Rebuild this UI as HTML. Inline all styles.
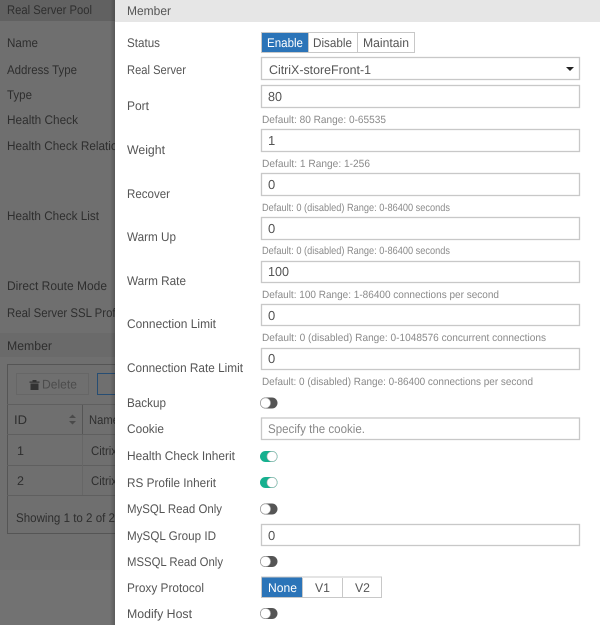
<!DOCTYPE html>
<html><head><meta charset="utf-8"><style>
html,body{margin:0;padding:0;width:600px;height:625px;overflow:hidden;background:#fff}
svg{display:block}
text{font-family:"Liberation Sans",sans-serif;font-size:12.5px;fill:#555}
.l text{fill:#2e2e2e}
.h{font-size:10.5px;fill:#8a8a8a}
.i{fill:#fff;stroke:#c8c8c8;stroke-width:1.3}
.v{fill:#555;font-size:13px}
.k{fill:#fff;stroke:#bbb;stroke-width:.6}
</style></head><body>
<svg width="600" height="625" viewBox="0 0 600 625" xmlns="http://www.w3.org/2000/svg" text-rendering="geometricPrecision">
<defs><linearGradient id="s" x1="0" x2="1"><stop offset="0" stop-color="#000" stop-opacity="0"/><stop offset="1" stop-color="#000" stop-opacity=".2"/></linearGradient></defs>
<g class="l">
<rect width="115" height="625" fill="#6f6f6f"/>
<rect width="115" height="21" fill="#616161"/>
<rect y="333" width="115" height="24" fill="#6a6a6a"/>
<rect y="570" width="115" height="55" fill="#727272"/>
<text x="7" y="14" textLength="85" lengthAdjust="spacingAndGlyphs">Real Server Pool</text>
<text x="7" y="47" textLength="31" lengthAdjust="spacingAndGlyphs">Name</text>
<text x="7" y="74" textLength="70" lengthAdjust="spacingAndGlyphs">Address Type</text>
<text x="7" y="99" textLength="25" lengthAdjust="spacingAndGlyphs">Type</text>
<text x="7" y="124" textLength="71" lengthAdjust="spacingAndGlyphs">Health Check</text>
<text x="7" y="150" textLength="117" lengthAdjust="spacingAndGlyphs">Health Check Relation</text>
<text x="7" y="220" textLength="92" lengthAdjust="spacingAndGlyphs">Health Check List</text>
<text x="7" y="290" textLength="100" lengthAdjust="spacingAndGlyphs">Direct Route Mode</text>
<text x="7" y="317" textLength="120" lengthAdjust="spacingAndGlyphs">Real Server SSL Profile</text>
<text x="7" y="350" textLength="45" lengthAdjust="spacingAndGlyphs">Member</text>
<rect x="7.500" y="364.500" width="120" height="169" fill="none" stroke="#555"/>
<rect x="16.500" y="373.500" width="72" height="21" fill="none" stroke="#666"/>
<path d="M30.500 383.500h8v6.500h-8zM29.500 381.500h10v1.300h-10zM32.500 380h4v1.500h-4z" fill="#333"/>
<text x="42" y="388.500" textLength="35" lengthAdjust="spacingAndGlyphs" style="fill:#4c4c4c">Delete</text>
<rect x="97.500" y="373.500" width="30" height="21" fill="none" stroke="#264d73"/>
<path d="M7 404.500h110M7 434.500h110M7 465.500h110M7 495.500h110" stroke="#5f5f5f"/>
<path d="M82.500 405v29" stroke="#555"/>
<path d="M82.500 435v60" stroke="#666"/>
<text x="14" y="424" textLength="13" lengthAdjust="spacingAndGlyphs">ID</text>
<path d="M69 418l3.500-3.500 3.500 3.500zM69 421l3.500 3.500 3.500-3.500z" fill="#4a4a4a"/>
<text x="89" y="424" textLength="30" lengthAdjust="spacingAndGlyphs">Name</text>
<text x="17" y="455">1</text><text x="17" y="485">2</text>
<text x="91" y="455" textLength="26" lengthAdjust="spacingAndGlyphs">Citrix</text>
<text x="91" y="485" textLength="26" lengthAdjust="spacingAndGlyphs">Citrix</text>
<text x="16" y="522" textLength="99" lengthAdjust="spacingAndGlyphs">Showing 1 to 2 of 2</text>
</g>
<rect x="110" width="5" height="625" fill="url(#s)"/>
<rect x="115" width="485" height="625" fill="#fff"/>
<rect x="115" width="485" height="22" fill="#e6e6e6"/>
<text x="127" y="15" textLength="44" lengthAdjust="spacingAndGlyphs">Member</text>

<text x="127" y="47" textLength="33" lengthAdjust="spacingAndGlyphs">Status</text>
<text x="127" y="74" textLength="59" lengthAdjust="spacingAndGlyphs">Real Server</text>
<text x="127" y="110" textLength="22" lengthAdjust="spacingAndGlyphs">Port</text>
<text x="127" y="154" textLength="38" lengthAdjust="spacingAndGlyphs">Weight</text>
<text x="127" y="198" textLength="43" lengthAdjust="spacingAndGlyphs">Recover</text>
<text x="127" y="241" textLength="49" lengthAdjust="spacingAndGlyphs">Warm Up</text>
<text x="127" y="285" textLength="59" lengthAdjust="spacingAndGlyphs">Warm Rate</text>
<text x="127" y="328" textLength="89" lengthAdjust="spacingAndGlyphs">Connection Limit</text>
<text x="127" y="372" textLength="116" lengthAdjust="spacingAndGlyphs">Connection Rate Limit</text>
<text x="127" y="407" textLength="39" lengthAdjust="spacingAndGlyphs">Backup</text>
<text x="127" y="433" textLength="37" lengthAdjust="spacingAndGlyphs">Cookie</text>
<text x="127" y="460" textLength="108" lengthAdjust="spacingAndGlyphs">Health Check Inherit</text>
<text x="127" y="487" textLength="89" lengthAdjust="spacingAndGlyphs">RS Profile Inherit</text>
<text x="127" y="513" textLength="95" lengthAdjust="spacingAndGlyphs">MySQL Read Only</text>
<text x="127" y="540" textLength="89" lengthAdjust="spacingAndGlyphs">MySQL Group ID</text>
<text x="127" y="566" textLength="96" lengthAdjust="spacingAndGlyphs">MSSQL Read Only</text>
<text x="127" y="592" textLength="77" lengthAdjust="spacingAndGlyphs">Proxy Protocol</text>
<text x="127" y="618" textLength="65" lengthAdjust="spacingAndGlyphs">Modify Host</text>

<rect x="261.500" y="32.500" width="153" height="20" fill="#fff" stroke="#c8c8c8"/>
<rect x="262" y="33" width="46" height="19" fill="#2b74b8"/>
<path d="M308.500 33v19M357.500 33v19" stroke="#c8c8c8"/>
<text x="267" y="47" textLength="36" lengthAdjust="spacingAndGlyphs" style="fill:#fff">Enable</text>
<text x="313" y="47" textLength="39" lengthAdjust="spacingAndGlyphs">Disable</text>
<text x="363" y="47" textLength="46" lengthAdjust="spacingAndGlyphs">Maintain</text>

<rect class="i" x="261.500" y="57.500" width="318" height="22"/>
<text x="269" y="74" textLength="102" lengthAdjust="spacingAndGlyphs">CitriX-storeFront-1</text>
<path d="M566 67h8l-4 4z" fill="#222"/>

<rect class="i" x="261.500" y="85.500" width="318" height="22"/><text class="v" x="268" y="101" textLength="14" lengthAdjust="spacingAndGlyphs">80</text>
<text class="h" x="262" y="123" textLength="124" lengthAdjust="spacingAndGlyphs">Default: 80 Range: 0-65535</text>
<rect class="i" x="261.500" y="129.500" width="318" height="22"/><text class="v" x="268" y="145">1</text>
<text class="h" x="262" y="167" textLength="108" lengthAdjust="spacingAndGlyphs">Default: 1 Range: 1-256</text>
<rect class="i" x="261.500" y="173.500" width="318" height="22"/><text class="v" x="268" y="189">0</text>
<text class="h" x="262" y="211" textLength="188" lengthAdjust="spacingAndGlyphs">Default: 0 (disabled) Range: 0-86400 seconds</text>
<rect class="i" x="261.500" y="217.500" width="318" height="22"/><text class="v" x="268" y="233">0</text>
<text class="h" x="262" y="254" textLength="188" lengthAdjust="spacingAndGlyphs">Default: 0 (disabled) Range: 0-86400 seconds</text>
<rect class="i" x="261.500" y="261.500" width="318" height="21"/><text class="v" x="268" y="276" textLength="21" lengthAdjust="spacingAndGlyphs">100</text>
<text class="h" x="262" y="298" textLength="237" lengthAdjust="spacingAndGlyphs">Default: 100 Range: 1-86400 connections per second</text>
<rect class="i" x="261.500" y="304.500" width="318" height="21"/><text class="v" x="268" y="320">0</text>
<text class="h" x="262" y="341" textLength="284" lengthAdjust="spacingAndGlyphs">Default: 0 (disabled) Range: 0-1048576 concurrent connections</text>
<rect class="i" x="261.500" y="348.500" width="318" height="21"/><text class="v" x="268" y="363">0</text>
<text class="h" x="262" y="385" textLength="271" lengthAdjust="spacingAndGlyphs">Default: 0 (disabled) Range: 0-86400 connections per second</text>

<rect class="i" x="261.500" y="418" width="318" height="21.500"/>
<text x="268" y="433" textLength="97" lengthAdjust="spacingAndGlyphs" style="fill:#888">Specify the cookie.</text>
<rect class="i" x="261.500" y="524.500" width="318" height="21"/><text class="v" x="268" y="540">0</text>

<rect x="261.500" y="577" width="120" height="20.500" fill="#fff" stroke="#c8c8c8"/>
<rect x="262" y="577.500" width="40" height="19.500" fill="#2b74b8"/>
<path d="M302.500 578v19M342.500 578v19" stroke="#c8c8c8"/>
<text x="268" y="592" textLength="29" lengthAdjust="spacingAndGlyphs" style="fill:#fff">None</text>
<text x="315" y="592" textLength="15" lengthAdjust="spacingAndGlyphs">V1</text>
<text x="355" y="592" textLength="15" lengthAdjust="spacingAndGlyphs">V2</text>

<rect x="260" y="397.500" width="17.500" height="11" rx="5.500" fill="#555"/><circle cx="265.500" cy="403" r="5" class="k"/>
<rect x="260" y="503.500" width="17.500" height="11" rx="5.500" fill="#555"/><circle cx="265.500" cy="509" r="5" class="k"/>
<rect x="260" y="556" width="17.500" height="11" rx="5.500" fill="#555"/><circle cx="265.500" cy="561.500" r="5" class="k"/>
<rect x="260" y="608" width="17.500" height="11" rx="5.500" fill="#555"/><circle cx="265.500" cy="613.500" r="5" class="k"/>
<rect x="260" y="451" width="17.500" height="11" rx="5.500" fill="#16b08f"/><circle cx="272" cy="456.500" r="5" class="k"/>
<rect x="260" y="477" width="17.500" height="11" rx="5.500" fill="#16b08f"/><circle cx="272" cy="482.500" r="5" class="k"/>
</svg>
</body></html>
